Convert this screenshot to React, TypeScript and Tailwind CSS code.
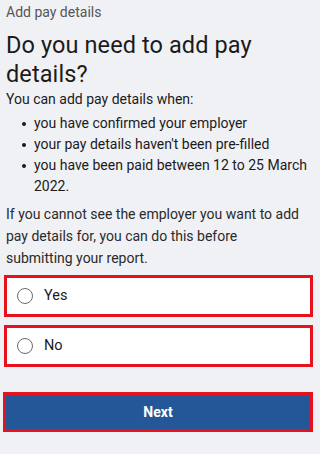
const bullets = [
  'you have confirmed your employer',
  "your pay details haven't been pre-filled",
  'you have been paid between 12 to 25 March 2022.',
]

export default function App() {
  return (
    <div className="min-h-[454px] w-[320px] bg-[#f0f1f5] font-['Roboto',sans-serif] text-[#1b1b1b]">
      <div className="px-[6px] pt-[3px]">
        <p className="text-[14px] leading-[18px] text-[#555]">Add pay details</p>
        <h1 className="mt-[10px] text-[23.5px] leading-[29px] font-normal tracking-[0.1px]">
          Do you need to add pay details?
        </h1>
        <p className="text-[14px] leading-[21px]">You can add pay details when:</p>
        <ul className="mt-[3px] pl-[16px] pr-[4px] text-[14px] leading-[21px]">
          {bullets.map(item => (
            <li key={item} className="flex">
              <span className="mt-[9px] mr-[8px] h-[4px] w-[4px] shrink-0 rounded-full bg-[#1b1b1b]" />
              <span>{item}</span>
            </li>
          ))}
        </ul>
        <p className="mt-[6px] text-[14px] leading-[22px] text-[#2a2a2a]">
          If you cannot see the employer you want to add pay details for, you can do this before
          <br />
          submitting your report.
        </p>
      </div>

      <div className="mt-[6px] flex flex-col gap-[8px] pl-[4px] pr-[7px]">
        {['Yes', 'No'].map(opt => (
          <label
            key={opt}
            className="flex h-[42px] items-center gap-[11px] border-[3px] border-[#e8121f] bg-white pl-[10px]"
          >
            <span className="h-[16px] w-[16px] rounded-full border-[1.5px] border-[#6b6b6b]" />
            <span className="text-[14.5px]">{opt}</span>
          </label>
        ))}
      </div>

      <div className="mt-[25px] pl-[3px] pr-[7px]">
        <button className="flex h-[40px] w-full items-center justify-center border-[3px] border-[#e8121f] bg-[#245797] text-[14px] font-bold text-white">
          Next
        </button>
      </div>
    </div>
  )
}
